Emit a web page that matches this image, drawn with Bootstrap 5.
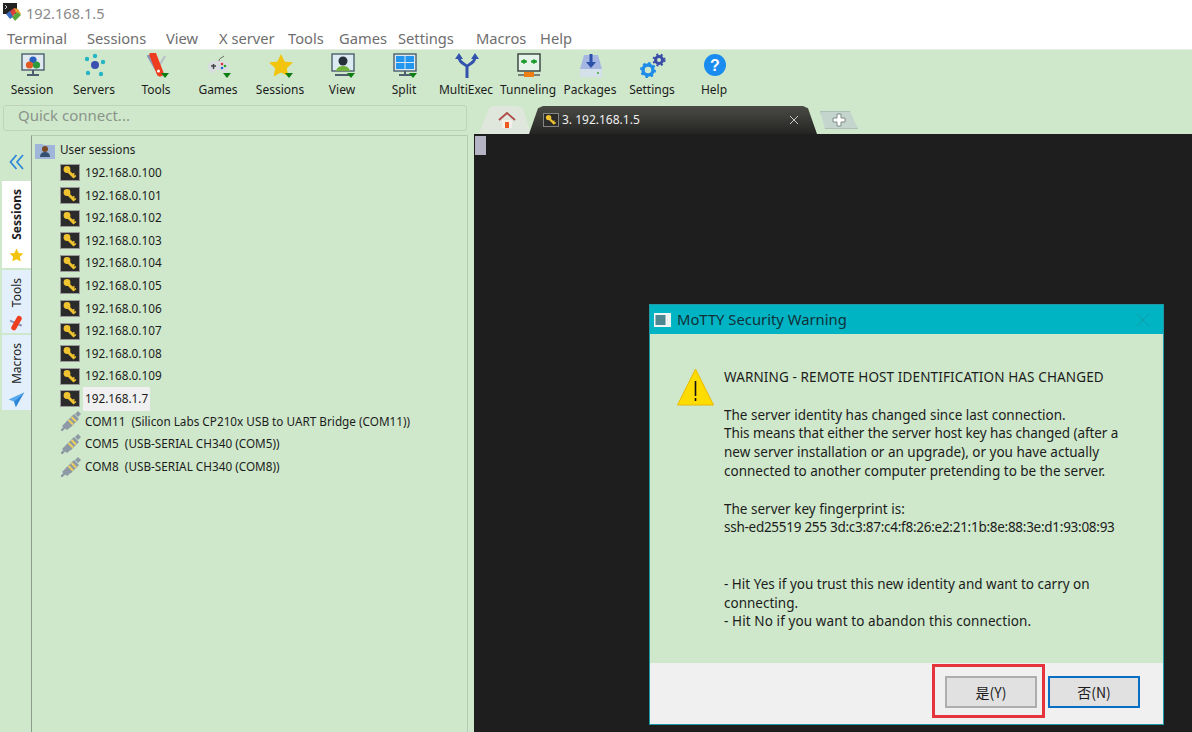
<!DOCTYPE html>
<html lang="en">
<head>
<meta charset="utf-8">
<title>MobaXterm</title>
<link href="https://cdn.jsdelivr.net/npm/bootstrap@5.3.0/dist/css/bootstrap.min.css" rel="stylesheet">
<style>
html,body{margin:0;height:732px;overflow:hidden}
body{background:#cfe8cb;font-family:"Noto Sans","Noto Sans CJK SC",sans-serif;color:#1a1a1a;position:relative}
.top-title{height:28px;background:#fff;color:#8a8a8a;font-size:14.6px;padding-left:3px;gap:5px}
.top-title svg{margin-top:-5px}
.top-menu{height:22px;background:#fff;color:#6e6e6e;font-size:14.7px;padding-left:7px;border-bottom:1px solid #e4efe2}
.top-menu span{display:block;white-space:nowrap}
.top-menu span:nth-child(1){width:80px}.top-menu span:nth-child(2){width:79px}.top-menu span:nth-child(3){width:53px}
.top-menu span:nth-child(4){width:69px}.top-menu span:nth-child(5){width:51px}.top-menu span:nth-child(6){width:59px}
.top-menu span:nth-child(7){width:78px}.top-menu span:nth-child(8){width:64px}
.tool-strip{height:54px;padding-left:1px}
.tool-item{width:62px;font-size:12px;color:#1c1c1c;padding-top:3px;white-space:nowrap}
.tool-item svg{display:block;width:26px;height:26px;margin:0 0 3px 2px}
.tool-item span{line-height:16px}
.quick-row{height:30px}
.quick-cell{width:468px;padding:1px 1px 3px 3px}
.quick-box{height:100%;border:1px solid #bfd2bc;border-radius:3px;color:#8a948a;font-size:15px;padding:0 0 5px 14px;background:#cfe8cb}
.tab-area{padding-left:11px}
.home-tab{width:52px;height:28px;background:#dfe6dc;clip-path:polygon(0 100%,10px 8%,14px 0,38px 0,44px 10%,52px 100%)}
.home-tab svg{width:18px;height:18px;margin-left:3px}
.dark-tab{width:288px;height:28px;margin-left:-2px;background:linear-gradient(#4b4b45,#242424);clip-path:polygon(0 100%,9px 8%,14px 0,274px 0,279px 8%,288px 100%);color:#f0f0f0;font-size:12px;padding-left:14px}
.dark-tab .key-mini{width:16px;height:14px;margin-right:3px}
.close-x{width:10px;height:10px;margin-left:auto;margin-right:18px}
.plus-tab{width:38px;height:18px;margin-left:3px;margin-bottom:5px;background:#c3d5cc;border:1px solid #aebfb6;clip-path:polygon(0 0,30px 0,38px 100%,5px 100%)}
.plus-tab svg{width:14px;height:14px}
.main-row{height:598px}
.side-strip{width:31px}
.chev-box{height:47px;padding-top:20px;padding-left:2px}
.chev-box svg{width:16px;height:16px}
.side-tab{width:29px;margin-left:2px;background:#e3effa;gap:7px;margin-bottom:2px;font-size:12px;color:#1c1c1c}
.side-tab.on{background:#fff;font-weight:700;height:87px;padding-top:8px;gap:8px}
.side-tab.on svg{width:15px;height:15px}
.side-tab.t2{height:63px;padding-top:8px}
.side-tab.t3{height:75px;padding-top:8px}
.side-tab span{writing-mode:vertical-rl;transform:rotate(180deg);line-height:14px}
.side-tab svg{width:17px;height:17px}
.tree-panel{width:437px;margin-top:1px;border:1px solid #b8c9b5;border-left-color:#8e9c8c;border-bottom:0;padding:3px 0 0 3px;font-size:11.75px;color:#1c1c1c}
.tree-row{height:22.6px;white-space:nowrap;padding-left:25px}
.tree-row.root{padding-left:0}
.tree-row svg{flex:none;width:20px;height:17px;margin-right:5px}
.tree-row svg.plug-i{height:20px;margin-left:1px;margin-right:4px}
.sel-text{background:#f0f0f0;padding:3px 2px;margin-left:-2px}
.term{flex:1;margin-left:6px;background:#1e1e1e;position:relative}
.term-cursor{width:11px;height:19px;background:#b4b4c4;margin-top:2px;margin-left:1px}
.warn-dlg{position:absolute;left:649px;top:304px;width:515px;height:421px;border:1px solid #1c9aa6;background:#cfe8cb}
.warn-head{height:29px;background:#00b4c4;color:#123038;font-size:14.8px;padding-left:4px;gap:6px;flex:none}
.warn-head svg{width:17px;height:14px}
.warn-head svg.warn-x{width:12px;height:12px;margin-left:auto;margin-right:14px}
.warn-body{flex:1;padding:34px 0 0 27px;font-size:13.5px;line-height:18.8px;color:#1c1c1c;gap:10px}
.warn-body svg{flex:none;width:37px;height:38px}
.ls-wide{letter-spacing:.125px}
.ls-tight{letter-spacing:-.27px}
.ls-mean{letter-spacing:-.08px}
.ls-no{letter-spacing:.1px}
.warn-foot{height:61px;background:#f0f0f0;flex:none;padding:13px 23px 0 0;gap:11px;position:relative}
.dlg-btn{width:92px;height:32px;border-radius:0;border:2px solid #adadad;background:#e1e1e1;font-size:14px;padding:0;color:#1c1c1c;font-family:"Noto Sans CJK SC","Noto Sans",sans-serif}
.dlg-btn.focus-b{border-color:#0a6fc4}
.red-mark{position:absolute;left:282px;top:1px;width:113px;height:54px;border:3px solid #e5343c;pointer-events:none}
</style>
</head>
<body>
<svg width="0" height="0" class="d-block position-absolute">
<defs>
<symbol id="ks" viewBox="0 0 20 17"><rect x=".5" y=".5" width="19" height="16" fill="#2b2b2b" stroke="#9a9a9a"/><circle cx="7" cy="5.500" r="3.400" fill="#f0c330"/><path d="M8 7l6.500 6.500" stroke="#f0c330" stroke-width="2.800"/><path d="M12 11l2.500-1.500M14 13l2-1.500" stroke="#f0c330" stroke-width="1.500"/></symbol>
<symbol id="plug" viewBox="0 0 20 20"><path d="M1 15l5-5 5 5-5 4z" fill="#8d9aa6"/><path d="M5 11l8-8 5 5-8 8z" fill="#8d9aa6"/><path d="M7.500 9l4.500 4.500M10.500 6l4.500 4.500" stroke="#efd35a" stroke-width="1.800"/><path d="M14 3l3-3 3 3-3 3z" fill="#8d9aa6"/><path d="M0 20l4-4" stroke="#8d9aa6" stroke-width="2.400"/></symbol>
<symbol id="tri" viewBox="0 0 26 26"><path d="M17 20h8l-4 5z" fill="#0b7d12"/></symbol>
</defs>
</svg>

<div class="top-title d-flex align-items-center">
<svg width="18" height="18" viewBox="0 0 18 18"><rect width="14" height="11" fill="#222"/><path d="M2 2l2 2-2 2" stroke="#fff" fill="none" stroke-width=".8"/><path d="M5 10l6-5 3 4-5 5z" fill="#d8403c"/><path d="M11 5l4 1 3 5-4 1z" fill="#e8a030"/><path d="M9 14l5-5 4 3-6 6z" fill="#5aa83c"/><path d="M3 11l4-3 3 6-3 2z" fill="#3a6fc0"/></svg>
<span>192.168.1.5</span>
</div>
<div class="top-menu d-flex align-items-center"><span>Terminal</span><span>Sessions</span><span>View</span><span>X server</span><span>Tools</span><span>Games</span><span>Settings</span><span>Macros</span><span>Help</span></div>

<div class="tool-strip d-flex">
<div class="tool-item d-flex flex-column align-items-center"><svg viewBox="0 0 26 26"><rect x="2" y="1" width="22" height="16" fill="#dfe9ef" stroke="#4c5f6e" stroke-width="1.400"/><path d="M13 17v4M7 22h12" stroke="#4c5f6e" stroke-width="2"/><circle cx="13" cy="7" r="3.600" fill="#2a5fc0"/><circle cx="9.500" cy="12" r="3.600" fill="#e25a24"/><circle cx="16.500" cy="12" r="3.600" fill="#2e9a3c"/></svg><span>Session</span></div>
<div class="tool-item d-flex flex-column align-items-center"><svg viewBox="0 0 26 26"><circle cx="13" cy="12" r="4" fill="#3a4fb0"/><circle cx="13" cy="3" r="2.200" fill="#25b5c5"/><circle cx="5" cy="6" r="2.200" fill="#25b5c5"/><circle cx="21" cy="9" r="2.200" fill="#25b5c5"/><circle cx="6" cy="20" r="2.200" fill="#25b5c5"/><circle cx="19" cy="21" r="2.200" fill="#25b5c5"/></svg><span>Servers</span></div>
<div class="tool-item d-flex flex-column align-items-center"><svg viewBox="0 0 26 26"><path d="M4 2l8 14" stroke="#8a93b8" stroke-width="3"/><path d="M21 3l-9 15" stroke="#b8bcc8" stroke-width="2"/><path d="M9 2l7 18" stroke="#ee3d1e" stroke-width="7" stroke-linecap="round"/><circle cx="14.500" cy="18" r="1.500" fill="#fff"/><use href="#tri"/></svg><span>Tools</span></div>
<div class="tool-item d-flex flex-column align-items-center"><svg viewBox="0 0 26 26"><path d="M2 14c0-4 3-6 6-6h9c3 0 6 2 6 6s-2 6-4 6-3-3-5-3h-3c-2 0-3 3-5 3s-4-2-4-6z" fill="#d9dde0"/><path d="M5 13h5M7.500 11v5" stroke="#444" stroke-width="1.500"/><circle cx="16" cy="11" r="1.300" fill="#d33"/><circle cx="19" cy="13" r="1.300" fill="#2a2"/><circle cx="16" cy="15" r="1.300" fill="#26c"/><path d="M13 8c0-3 3-3 5-5" stroke="#666" fill="none"/><use href="#tri"/></svg><span>Games</span></div>
<div class="tool-item d-flex flex-column align-items-center"><svg viewBox="0 0 26 26"><path d="M13 1l3.600 7.600 8.400 1-6.200 5.700 1.600 8.300L13 19.500 5.600 23.600l1.600-8.300L1 9.600l8.400-1z" fill="#f2c40e"/><use href="#tri"/></svg><span>Sessions</span></div>
<div class="tool-item d-flex flex-column align-items-center"><svg viewBox="0 0 26 26"><rect x="2" y="1" width="22" height="17" fill="#dceaf2" stroke="#4c5f6e" stroke-width="1.400"/><circle cx="13" cy="8" r="4.500" fill="#26303a"/><path d="M6 18c1-4 4-5 7-5s6 1 7 5z" fill="#6fb33a"/><path d="M5 22h16" stroke="#4c5f6e" stroke-width="2"/><use href="#tri"/></svg><span>View</span></div>
<div class="tool-item d-flex flex-column align-items-center"><svg viewBox="0 0 26 26"><rect x="2" y="1" width="22" height="17" fill="#dde8ee" stroke="#4c5f6e" stroke-width="1.400"/><path d="M4 3h8.500v6H4zM13.500 3H22v6h-8.500zM4 10h8.500v6H4zM13.500 10H22v6h-8.500z" fill="#2296ee"/><path d="M13 18v3M7 22h12" stroke="#4c5f6e" stroke-width="2"/><use href="#tri"/></svg><span>Split</span></div>
<div class="tool-item d-flex flex-column align-items-center"><svg viewBox="0 0 26 26"><path d="M13 25V14C13 11 5 11 5 4M13 14c0-3 8-3 8-10" fill="none" stroke="#3352ad" stroke-width="3"/><path d="M1 6l4-6 4 6zM17 6l4-6 4 6z" fill="#3352ad"/></svg><span>MultiExec</span></div>
<div class="tool-item d-flex flex-column align-items-center"><svg viewBox="0 0 26 26"><rect x="2" y="1" width="22" height="17" fill="#e6f3ea" stroke="#33413a" stroke-width="1.400"/><path d="M5 8.500h6M15 8.500h6" stroke="#1e9c2c" stroke-width="1.800"/><path d="M5 8.500l3-2.500v5zM21 8.500l-3-2.500v5zM11 8.500l-3-2.500v5zM15 8.500l3-2.500v5z" fill="#1e9c2c"/><path d="M2 22h22" stroke="#555" stroke-width="1.400"/><rect x="8" y="19" width="10" height="5" fill="#ee7d14"/></svg><span>Tunneling</span></div>
<div class="tool-item d-flex flex-column align-items-center"><svg viewBox="0 0 26 26"><path d="M6 2h14l4 14v8H2v-8z" fill="#a6b6e2"/><path d="M2 16h22v8H2z" fill="#d4e0ea"/><path d="M13 1v10" stroke="#2c4fa8" stroke-width="3"/><path d="M8 9h10l-5 6z" fill="#2c4fa8"/><circle cx="20" cy="20" r="1" fill="#3aa83a"/></svg><span>Packages</span></div>
<div class="tool-item d-flex flex-column align-items-center"><svg viewBox="0 0 26 26"><circle cx="8" cy="17" r="5" fill="none" stroke="#1f8ce8" stroke-width="3.500"/><circle cx="8" cy="17" r="7" fill="none" stroke="#1f8ce8" stroke-width="2" stroke-dasharray="2.500 3"/><circle cx="19" cy="7" r="3.500" fill="none" stroke="#3a4ca8" stroke-width="3"/><circle cx="19" cy="7" r="5.500" fill="none" stroke="#3a4ca8" stroke-width="2" stroke-dasharray="2 2.500"/></svg><span>Settings</span></div>
<div class="tool-item d-flex flex-column align-items-center"><svg viewBox="0 0 26 26"><circle cx="13" cy="12" r="11" fill="#1a8cf0"/><text x="13" y="18" text-anchor="middle" font-family="Liberation Sans" font-weight="700" font-size="16" fill="#fff">?</text></svg><span>Help</span></div>
</div>

<div class="quick-row d-flex">
<div class="quick-cell"><div class="quick-box d-flex align-items-center">Quick connect...</div></div>
<div class="tab-area d-flex align-items-end">
<div class="home-tab d-flex align-items-center justify-content-center"><svg viewBox="0 0 18 18"><path d="M1 9l8-7 8 7" fill="none" stroke="#b04a48" stroke-width="1.800"/><path d="M4 9h10v8H4z" fill="#f3f0ea"/><path d="M7 11h4v6H7z" fill="#ee5a1e"/></svg></div>
<div class="dark-tab d-flex align-items-center"><svg class="key-mini"><use href="#ks"/></svg><span>3. 192.168.1.5</span><svg class="close-x" viewBox="0 0 10 10"><path d="M1 1l8 8M9 1l-8 8" stroke="#c8c8c8"/></svg></div>
<div class="plus-tab d-flex align-items-center justify-content-center"><svg viewBox="0 0 14 14"><path d="M5 1h4v4h4v4H9v4H5V9H1V5h4z" fill="#fff" stroke="#7e8a88"/></svg></div>
</div>
</div>

<div class="main-row d-flex">
<div class="side-strip">
<div class="chev-box d-flex justify-content-center"><svg viewBox="0 0 16 16"><path d="M7.500 1L1.500 8l6 7M14 1L8 8l6 7" fill="none" stroke="#2b86d8" stroke-width="1.700"/></svg></div>
<div class="side-tab on d-flex flex-column align-items-center"><span>Sessions</span><svg viewBox="0 0 26 26"><path d="M13 1l3.600 7.600 8.400 1-6.200 5.700 1.600 8.300L13 19.500 5.600 23.600l1.600-8.300L1 9.600l8.400-1z" fill="#f2c40e"/></svg></div>
<div class="side-tab t2 d-flex flex-column align-items-center"><span>Tools</span><svg viewBox="0 0 26 26"><path d="M3 10l18 8" stroke="#8a93b8" stroke-width="3"/><path d="M9 21L17 7" stroke="#ee3d1e" stroke-width="8" stroke-linecap="round"/></svg></div>
<div class="side-tab t3 d-flex flex-column align-items-center"><span>Macros</span><svg viewBox="0 0 26 26"><path d="M25 2L1 13l8 3z" fill="#52a8ee"/><path d="M25 2L9 16l3 9z" fill="#2b86d8"/></svg></div>
</div>
<div class="tree-panel">
<div class="tree-row root d-flex align-items-center"><svg viewBox="0 0 20 17"><path d="M0 2h7l2 1h11v14H0z" fill="#9fb6d8"/><circle cx="10" cy="7" r="3" fill="#7a4a22"/><path d="M5 15c0-4 3-5 5-5s5 1 5 5z" fill="#33506e"/></svg><span>User sessions</span></div>
<div class="tree-row d-flex align-items-center"><svg><use href="#ks"/></svg><span>192.168.0.100</span></div>
<div class="tree-row d-flex align-items-center"><svg><use href="#ks"/></svg><span>192.168.0.101</span></div>
<div class="tree-row d-flex align-items-center"><svg><use href="#ks"/></svg><span>192.168.0.102</span></div>
<div class="tree-row d-flex align-items-center"><svg><use href="#ks"/></svg><span>192.168.0.103</span></div>
<div class="tree-row d-flex align-items-center"><svg><use href="#ks"/></svg><span>192.168.0.104</span></div>
<div class="tree-row d-flex align-items-center"><svg><use href="#ks"/></svg><span>192.168.0.105</span></div>
<div class="tree-row d-flex align-items-center"><svg><use href="#ks"/></svg><span>192.168.0.106</span></div>
<div class="tree-row d-flex align-items-center"><svg><use href="#ks"/></svg><span>192.168.0.107</span></div>
<div class="tree-row d-flex align-items-center"><svg><use href="#ks"/></svg><span>192.168.0.108</span></div>
<div class="tree-row d-flex align-items-center"><svg><use href="#ks"/></svg><span>192.168.0.109</span></div>
<div class="tree-row d-flex align-items-center"><svg><use href="#ks"/></svg><span class="sel-text">192.168.1.7</span></div>
<div class="tree-row d-flex align-items-center"><svg class="plug-i"><use href="#plug"/></svg><span>COM11&nbsp; (Silicon Labs CP210x USB to UART Bridge (COM11))</span></div>
<div class="tree-row d-flex align-items-center"><svg class="plug-i"><use href="#plug"/></svg><span>COM5&nbsp; (USB-SERIAL CH340 (COM5))</span></div>
<div class="tree-row d-flex align-items-center"><svg class="plug-i"><use href="#plug"/></svg><span>COM8&nbsp; (USB-SERIAL CH340 (COM8))</span></div>
</div>
<div class="term"><div class="term-cursor"></div></div>
</div>

<div class="warn-dlg d-flex flex-column">
<div class="warn-head d-flex align-items-center"><svg viewBox="0 0 17 14"><rect width="17" height="14" fill="#eef3f3"/><rect x="1.500" y="2" width="10" height="10" fill="#4d8890"/></svg><span>MoTTY Security Warning</span><svg class="warn-x" viewBox="0 0 12 12"><path d="M0 0l12 12M12 0L0 12" stroke="#109aa8"/></svg></div>
<div class="warn-body d-flex">
<svg viewBox="0 0 37 38"><path d="M18.500 1L36.500 37H.5z" fill="#ffdc00" stroke="#e8b800"/><path d="M18.500 13v15M18.500 30v3" stroke="#111" stroke-width="1.600"/></svg>
<div><span class="ls-wide">WARNING - REMOTE HOST IDENTIFICATION HAS CHANGED</span><br><br>The server identity has changed since last connection.<br><span class="ls-mean">This means that either the server host key has changed (after a</span><br>new server installation or an upgrade), or you have actually<br>connected to another computer pretending to be the server.<br><br>The server key fingerprint is:<br><span class="ls-tight">ssh-ed25519 255 3d:c3:87:c4:f8:26:e2:21:1b:8e:88:3e:d1:93:08:93</span><br><br><br>- Hit Yes if you trust this new identity and want to carry on<br>connecting.<br><span class="ls-no">- Hit No if you want to abandon this connection.</span></div>
</div>
<div class="warn-foot d-flex justify-content-end">
<button type="button" class="btn dlg-btn">是(Y)</button>
<button type="button" class="btn dlg-btn focus-b">否(N)</button>
<div class="red-mark"></div>
</div>
</div>
<script src="https://cdn.jsdelivr.net/npm/bootstrap@5.3.0/dist/js/bootstrap.bundle.min.js"></script>
</body>
</html>
